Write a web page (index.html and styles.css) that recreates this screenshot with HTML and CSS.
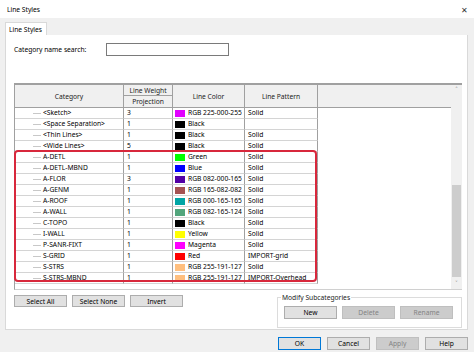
FILE: index.html
```html
<!DOCTYPE html>
<html lang="en">
<head>
    <meta charset="UTF-8">
    <title>Line Styles</title>
    <link rel="stylesheet" href="styles.css">
</head>
<body>
    <div class="titlebar">
        <span>Line Styles</span>
        <span class="close">&#x2715;</span>
    </div>

    <div class="dialog">
        <div class="tabs">
            <div class="tab">Line Styles</div>
        </div>

        <div class="panel">
            <div class="search-row">
                <label for="search">Category name search:</label>
                <input type="text" id="search">
            </div>

            <div class="list">
                <div class="list-body">
                    <div class="header">
                        <div class="hcell span">Category</div>
                        <div class="hcell">Line Weight</div>
                        <div class="hcell span">Line Color</div>
                        <div class="hcell span">Line Pattern</div>
                        <div class="hcell span blank"></div>
                        <div class="hcell">Projection</div>
                    </div>
                    <div id="rows"></div>
                    <div class="highlight"></div>
                </div>
                <div class="scrollbar">
                    <div class="arrow">&#x2C4;</div>
                    <div class="track"><div class="thumb"></div></div>
                    <div class="arrow">&#x2C5;</div>
                </div>
            </div>

            <div class="bottom-row">
                <div class="select-buttons">
                    <button>Select All</button>
                    <button>Select None</button>
                    <button>Invert</button>
                </div>
                <fieldset class="group">
                    <legend>Modify Subcategories</legend>
                    <button>New</button>
                    <button disabled>Delete</button>
                    <button disabled>Rename</button>
                </fieldset>
            </div>
        </div>

        <div class="actions">
            <button class="default">OK</button>
            <button>Cancel</button>
            <button disabled>Apply</button>
            <button>Help</button>
        </div>
    </div>

    <script>
        // Subcategory rows: name, weight, color label, swatch, pattern
        const lineStyles = [
            ['<Sketch>', '3', 'RGB 225-000-255', '#e100ff', 'Solid'],
            ['<Space Separation>', '1', 'Black', '#000000', ''],
            ['<Thin Lines>', '1', 'Black', '#000000', 'Solid'],
            ['<Wide Lines>', '5', 'Black', '#000000', 'Solid'],
            ['A-DETL', '1', 'Green', '#00ff00', 'Solid'],
            ['A-DETL-MBND', '1', 'Blue', '#0000ff', 'Solid'],
            ['A-FLOR', '3', 'RGB 082-000-165', '#5200a5', 'Solid'],
            ['A-GENM', '1', 'RGB 165-082-082', '#a55252', 'Solid'],
            ['A-ROOF', '1', 'RGB 000-165-165', '#00a5a5', 'Solid'],
            ['A-WALL', '1', 'RGB 082-165-124', '#52a57c', 'Solid'],
            ['C-TOPO', '1', 'Black', '#000000', 'Solid'],
            ['I-WALL', '1', 'Yellow', '#ffff00', 'Solid'],
            ['P-SANR-FIXT', '1', 'Magenta', '#ff00ff', 'Solid'],
            ['S-GRID', '1', 'Red', '#ff0000', 'IMPORT-grid'],
            ['S-STRS', '1', 'RGB 255-191-127', '#ffbf7f', 'Solid'],
            ['S-STRS-MBND', '1', 'RGB 255-191-127', '#ffbf7f', 'IMPORT-Overhead']
        ];

        const rows = document.getElementById('rows');
        lineStyles.forEach(style => {
            const row = document.createElement('div');
            row.className = 'row';

            const name = document.createElement('div');
            name.className = 'cell name';
            name.textContent = style[0];

            const weight = document.createElement('div');
            weight.className = 'cell';
            weight.textContent = style[1];

            const color = document.createElement('div');
            color.className = 'cell color';
            const swatch = document.createElement('span');
            swatch.className = 'swatch';
            swatch.style.backgroundColor = style[3];
            color.appendChild(swatch);
            color.appendChild(document.createTextNode(style[2]));

            const pattern = document.createElement('div');
            pattern.className = 'cell';
            pattern.textContent = style[4];

            const rest = document.createElement('div');
            rest.className = 'rest';

            row.append(name, weight, color, pattern, rest);
            rows.appendChild(row);
        });
    </script>
</body>
</html>
```

FILE: styles.css
```css
body {
    margin: 0;
    width: 474px;
    height: 355px;
    overflow: hidden;
    background-color: #fff;
    font-family: "Noto Sans", sans-serif;
    font-size: 6.7px;
    color: #000;
}
button {
    font-family: inherit;
    font-size: 6.7px;
    background-color: #e1e1e1;
    border: 1px solid #adadad;
    color: #000;
    padding: 0;
    height: 13px;
}
button:disabled {
    background-color: #cccccc;
    border-color: #bfbfbf;
    color: #838383;
}
.titlebar {
    height: 18px;
    display: flex;
    align-items: center;
    justify-content: space-between;
    padding: 0 6px 0 7px;
}
.close {
    font-size: 8px;
    color: #333;
}
.dialog {
    background-color: #f0f0f0;
    height: 334px;
    padding: 4px 6px 0 5px;
    box-sizing: border-box;
}
.tabs {
    display: flex;
    height: 13px;
}
.tab {
    background-color: #fff;
    border: 1px solid #d9d9d9;
    border-bottom: none;
    box-sizing: border-box;
    padding: 2px 4px 0 3px;
    line-height: 9px;
    white-space: nowrap;
}
.panel {
    background-color: #fff;
    border: 1px solid #d9d9d9;
    border-top: none;
    height: 295px;
    box-sizing: border-box;
    padding: 8px 0 0 8px;
}
.search-row {
    display: flex;
    align-items: center;
    height: 13px;
}
.search-row label {
    width: 92px;
}
.search-row input {
    width: 123px;
    height: 13px;
    box-sizing: border-box;
    border: 1px solid #7a7a7a;
    padding: 0;
    margin: 0;
}
.list {
    margin-top: 27px;
    width: 448px;
    height: 207px;
    display: flex;
    border-top: 2px solid #a0a0a0;
    border-left: 1px solid #a0a0a0;
    border-bottom: 1px solid #d0d0d0;
    box-sizing: border-box;
}
.list-body {
    position: relative;
    flex: 1;
}
.header {
    display: grid;
    grid-template-columns: 109px 49px 72px 73px 1fr;
    grid-template-rows: 11px 11px;
    background-color: #f0f0f0;
    border-bottom: 1px solid #a0a0a0;
}
.hcell {
    display: flex;
    align-items: center;
    justify-content: center;
    border-right: 1px solid #a0a0a0;
    color: #222;
}
.hcell.span {
    grid-row: span 2;
}
.hcell.blank {
    border-right: none;
}
.hcell:nth-child(2) {
    border-bottom: 1px solid #a0a0a0;
}
.row {
    display: grid;
    grid-template-columns: 109px 49px 72px 73px 1fr;
    height: 11px;
}
.cell {
    border-right: 1px solid #a0a0a0;
    border-bottom: 1px solid #d4d4d4;
    padding-left: 3px;
    line-height: 10px;
    white-space: nowrap;
    overflow: hidden;
}
.cell.name {
    padding-left: 28px;
    position: relative;
}
.cell.name::before {
    content: "";
    position: absolute;
    left: 18px;
    top: 5px;
    width: 8px;
    border-top: 1px solid #c8c8c8;
}
.cell.color {
    display: flex;
    align-items: center;
    padding-left: 2px;
}
.swatch {
    width: 10px;
    height: 7px;
    margin-right: 3px;
    flex-shrink: 0;
}
.highlight {
    position: absolute;
    left: -1px;
    top: 65px;
    width: 303px;
    height: 132px;
    border: 2px solid #d8283c;
    border-radius: 4px;
    box-sizing: border-box;
    pointer-events: none;
}
.scrollbar {
    width: 11px;
    display: flex;
    flex-direction: column;
    background-color: #f0f0f0;
}
.arrow {
    height: 10px;
    font-size: 7px;
    color: #606060;
    text-align: center;
    line-height: 10px;
}
.track {
    flex: 1;
    position: relative;
}
.thumb {
    position: absolute;
    left: 1px;
    right: 1px;
    top: 90px;
    bottom: 2px;
    background-color: #cdcdcd;
}
.bottom-row {
    display: flex;
    justify-content: space-between;
    width: 448px;
    margin-top: 3px;
}
.select-buttons {
    display: flex;
    gap: 5px;
    padding-top: 2px;
    align-self: flex-start;
}
.select-buttons button {
    width: 53px;
    height: 12px;
}
.group {
    margin: 0;
    width: 185px;
    height: 35px;
    box-sizing: border-box;
    border: 1px solid #dcdcdc;
    padding: 4px 0 0 6px;
    display: flex;
    gap: 5px;
    align-items: flex-start;
}
.group legend {
    padding: 0 1px;
    margin-left: -3px;
    color: #222;
}
.group button {
    width: 53px;
}
.actions {
    display: flex;
    justify-content: flex-end;
    gap: 6px;
    padding-top: 7px;
}
.actions button {
    width: 43px;
    height: 13px;
}
.actions button.default {
    border-color: #0078d7;
}
```
